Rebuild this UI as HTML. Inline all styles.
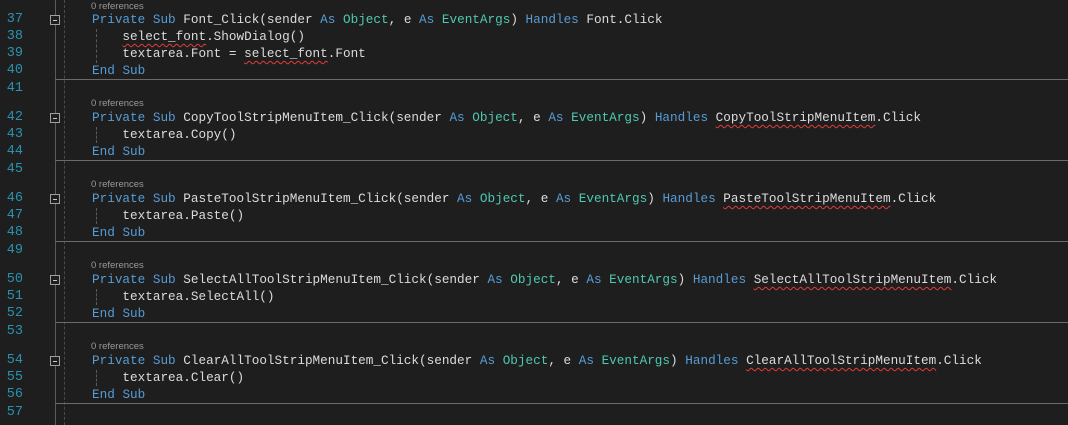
<!DOCTYPE html>
<html><head><meta charset="utf-8"><style>
body{margin:0;background:#1e1e1e;width:1068px;height:424px;overflow:hidden;position:relative;font-family:"Liberation Mono",monospace;}
#w{position:absolute;left:0;top:1px;width:1068px;height:424px}
.ln{position:absolute;left:0;width:23px;text-align:right;color:#2b91af;font-size:13.5px;line-height:17px;}
.c{position:absolute;left:92px;font-size:12.68px;line-height:17px;color:#dcdcdc;white-space:pre;}
.cl{position:absolute;left:91px;font-family:"Liberation Sans",sans-serif;font-size:9.5px;color:#999;line-height:13px;}
.k{color:#569cd6}.t{color:#4ec9b0}
.sq{text-decoration:underline wavy #e03c3c;text-decoration-thickness:1px;text-underline-offset:3px}
.box{position:absolute;left:50px;width:8px;height:8px;border:1px solid #a0a0a0;background:#1e1e1e}
.box:after{content:"";position:absolute;left:2px;top:3.5px;width:4px;height:1px;background:#c8c8c8}
.sep{position:absolute;left:55px;right:0;height:1px;background:#6a6a6a}
.vl{position:absolute;left:55px;top:-1px;width:1px;height:425px;background:#5a5a5a}
.dl{position:absolute;left:64px;top:-1px;height:425px;border-left:1px dashed #4a4a4a}
.ig{position:absolute;left:96px;border-left:1px dashed #5a5a5a}
</style></head><body><div id="w">
<div class="vl"></div><div class="dl"></div>
<div class="cl" style="top:-1px">0 references</div>
<div class="ln" style="top:10px">37</div><div class="box" style="top:14px"></div>
<div class="c" style="top:10px"><span class="k">Private</span> <span class="k">Sub</span> Font_Click(sender <span class="k">As</span> <span class="t">Object</span>, e <span class="k">As</span> <span class="t">EventArgs</span>) <span class="k">Handles</span> Font.Click</div>
<div class="ln" style="top:27px">38</div>
<div class="c" style="top:27px">    <span class="sq">select_font</span>.ShowDialog()</div>
<div class="ln" style="top:44px">39</div>
<div class="c" style="top:44px">    textarea.Font = <span class="sq">select_font</span>.Font</div>
<div class="ig" style="top:28px;height:34px"></div>
<div class="ln" style="top:61px">40</div>
<div class="c" style="top:61px"><span class="k">End</span> <span class="k">Sub</span></div>
<div class="sep" style="top:78px"></div>
<div class="ln" style="top:79px">41</div>

<div class="cl" style="top:96px">0 references</div>
<div class="ln" style="top:108px">42</div><div class="box" style="top:112px"></div>
<div class="c" style="top:108px"><span class="k">Private</span> <span class="k">Sub</span> CopyToolStripMenuItem_Click(sender <span class="k">As</span> <span class="t">Object</span>, e <span class="k">As</span> <span class="t">EventArgs</span>) <span class="k">Handles</span> <span class="sq">CopyToolStripMenuItem</span>.Click</div>
<div class="ln" style="top:125px">43</div>
<div class="c" style="top:125px">    textarea.Copy()</div>
<div class="ig" style="top:126px;height:16px"></div>
<div class="ln" style="top:142px">44</div>
<div class="c" style="top:142px"><span class="k">End</span> <span class="k">Sub</span></div>
<div class="sep" style="top:159px"></div>
<div class="ln" style="top:160px">45</div>

<div class="cl" style="top:177px">0 references</div>
<div class="ln" style="top:189px">46</div><div class="box" style="top:193px"></div>
<div class="c" style="top:189px"><span class="k">Private</span> <span class="k">Sub</span> PasteToolStripMenuItem_Click(sender <span class="k">As</span> <span class="t">Object</span>, e <span class="k">As</span> <span class="t">EventArgs</span>) <span class="k">Handles</span> <span class="sq">PasteToolStripMenuItem</span>.Click</div>
<div class="ln" style="top:206px">47</div>
<div class="c" style="top:206px">    textarea.Paste()</div>
<div class="ig" style="top:207px;height:16px"></div>
<div class="ln" style="top:223px">48</div>
<div class="c" style="top:223px"><span class="k">End</span> <span class="k">Sub</span></div>
<div class="sep" style="top:240px"></div>
<div class="ln" style="top:241px">49</div>

<div class="cl" style="top:258px">0 references</div>
<div class="ln" style="top:270px">50</div><div class="box" style="top:274px"></div>
<div class="c" style="top:270px"><span class="k">Private</span> <span class="k">Sub</span> SelectAllToolStripMenuItem_Click(sender <span class="k">As</span> <span class="t">Object</span>, e <span class="k">As</span> <span class="t">EventArgs</span>) <span class="k">Handles</span> <span class="sq">SelectAllToolStripMenuItem</span>.Click</div>
<div class="ln" style="top:287px">51</div>
<div class="c" style="top:287px">    textarea.SelectAll()</div>
<div class="ig" style="top:288px;height:16px"></div>
<div class="ln" style="top:304px">52</div>
<div class="c" style="top:304px"><span class="k">End</span> <span class="k">Sub</span></div>
<div class="sep" style="top:321px"></div>
<div class="ln" style="top:322px">53</div>

<div class="cl" style="top:339px">0 references</div>
<div class="ln" style="top:351px">54</div><div class="box" style="top:355px"></div>
<div class="c" style="top:351px"><span class="k">Private</span> <span class="k">Sub</span> ClearAllToolStripMenuItem_Click(sender <span class="k">As</span> <span class="t">Object</span>, e <span class="k">As</span> <span class="t">EventArgs</span>) <span class="k">Handles</span> <span class="sq">ClearAllToolStripMenuItem</span>.Click</div>
<div class="ln" style="top:368px">55</div>
<div class="c" style="top:368px">    textarea.Clear()</div>
<div class="ig" style="top:369px;height:16px"></div>
<div class="ln" style="top:385px">56</div>
<div class="c" style="top:385px"><span class="k">End</span> <span class="k">Sub</span></div>
<div class="sep" style="top:402px"></div>
<div class="ln" style="top:403px">57</div>
</div></body></html>
